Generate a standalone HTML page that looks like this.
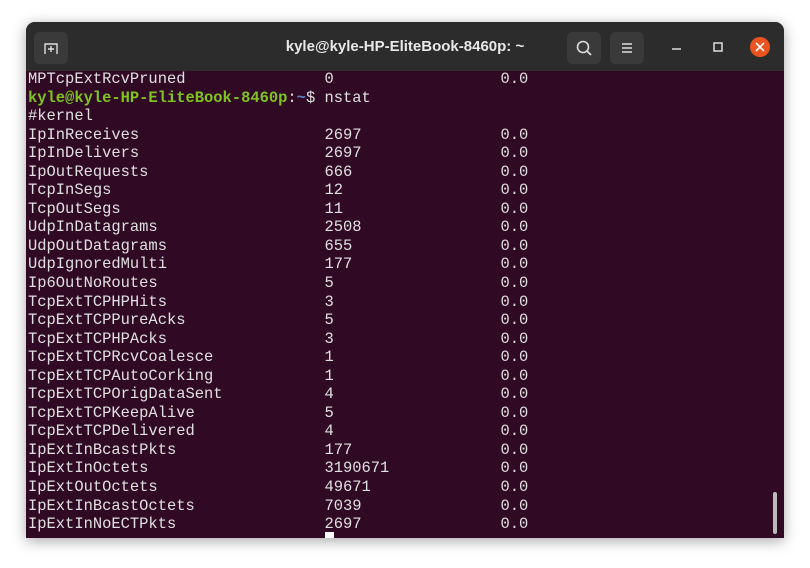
<!DOCTYPE html>
<html><head><style>
body{margin:0;width:810px;height:568px;background:#fff;overflow:hidden;position:relative;font-family:"Liberation Sans",sans-serif}
.win{position:absolute;left:26px;top:22px;width:758px;height:516px;border-radius:9px 9px 0 0;overflow:hidden;background:#300a24;box-shadow:0 3px 14px rgba(0,0,0,.35)}
.hdr{position:absolute;left:0;top:0;width:100%;height:49px;background:#2c2c2c}
.btn{position:absolute;top:10px;width:34px;height:32px;background:#3a3a3a;border-radius:5px}
.title{position:absolute;left:0;width:100%;top:16px;text-align:center;color:#e8e8e8;font-weight:bold;font-size:15px}
.term{position:absolute;left:2px;top:48px;font-family:"Liberation Mono",monospace;font-size:15.45px;line-height:18.55px;color:#e0e0e0;white-space:pre}
.g{color:#7fc41e;font-weight:bold}.b{color:#5c80c0;font-weight:bold}
</style></head><body>
<div class="win">
<div class="hdr">
<div class="btn" style="left:8px"><svg width="34" height="32"><path d="M11 22V12h12v10M17 14v6M14 17h6" stroke="#ddd" stroke-width="1.4" fill="none"/></svg></div>
<div class="title">kyle@kyle-HP-EliteBook-8460p: ~</div>
<div class="btn" style="left:541px"><svg width="34" height="32"><circle cx="16" cy="15" r="5.5" stroke="#ddd" stroke-width="1.6" fill="none"/><path d="M20 19l4 4" stroke="#ddd" stroke-width="1.8"/></svg></div>
<div class="btn" style="left:584px"><svg width="34" height="32"><path d="M12 12h10M12 16h10M12 20h10" stroke="#ddd" stroke-width="1.5"/></svg></div>
<svg style="position:absolute;left:640px;top:15px" width="120" height="22"><path d="M6 12h9" stroke="#ddd" stroke-width="1.5"/><rect x="48" y="6" width="8" height="8" stroke="#ddd" stroke-width="1.5" fill="none"/><circle cx="94" cy="10" r="10" fill="#e95420"/><path d="M90 6l8 8M98 6l-8 8" stroke="#fff" stroke-width="1.6"/></svg>
</div>
<div class="term">MPTcpExtRcvPruned               0                  0.0
<span class="g">kyle@kyle-HP-EliteBook-8460p</span>:<span class="b">~</span>$ nstat
#kernel
IpInReceives                    2697               0.0
IpInDelivers                    2697               0.0
IpOutRequests                   666                0.0
TcpInSegs                       12                 0.0
TcpOutSegs                      11                 0.0
UdpInDatagrams                  2508               0.0
UdpOutDatagrams                 655                0.0
UdpIgnoredMulti                 177                0.0
Ip6OutNoRoutes                  5                  0.0
TcpExtTCPHPHits                 3                  0.0
TcpExtTCPPureAcks               5                  0.0
TcpExtTCPHPAcks                 3                  0.0
TcpExtTCPRcvCoalesce            1                  0.0
TcpExtTCPAutoCorking            1                  0.0
TcpExtTCPOrigDataSent           4                  0.0
TcpExtTCPKeepAlive              5                  0.0
TcpExtTCPDelivered              4                  0.0
IpExtInBcastPkts                177                0.0
IpExtInOctets                   3190671            0.0
IpExtOutOctets                  49671              0.0
IpExtInBcastOctets              7039               0.0
IpExtInNoECTPkts                2697               0.0
</div>
<div style="position:absolute;left:299px;top:510px;width:9px;height:6px;background:#fff"></div>
<div style="position:absolute;left:747px;top:470px;width:4px;height:42px;background:#bbb;border-radius:2px"></div>
</div>
</body></html>
